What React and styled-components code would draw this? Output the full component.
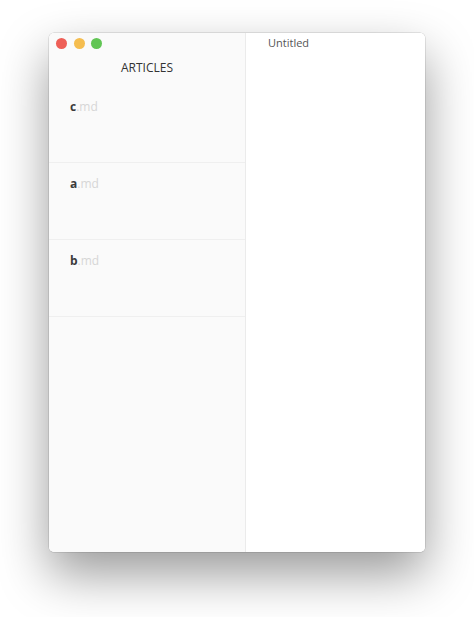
import React from 'react';
import styled, { createGlobalStyle } from 'styled-components';

const GlobalStyle = createGlobalStyle`
  html, body {
    margin: 0;
    padding: 0;
    background: #ffffff;
  }
  body {
    font-family: "Open Sans", "Noto Sans", sans-serif;
    -webkit-font-smoothing: antialiased;
  }
`;

const Page = styled.div`
  display: flex;
  justify-content: center;
  padding-top: 33px;
  height: 617px;
  box-sizing: border-box;
`;

const Window = styled.div`
  width: 376px;
  height: 519px;
  display: flex;
  border-radius: 5px;
  overflow: hidden;
  background: #ffffff;
  box-shadow: 0 0 0 0.5px rgba(0, 0, 0, 0.18), 0 22px 50px rgba(0, 0, 0, 0.4);
`;

const Sidebar = styled.aside`
  width: 196px;
  flex-shrink: 0;
  background: #fafafa;
  border-right: 1px solid #ebebeb;
  display: flex;
  flex-direction: column;
`;

const TitleBar = styled.div`
  height: 20px;
  display: flex;
  align-items: center;
  gap: 6.5px;
  padding-left: 7px;
`;

const Light = styled.span`
  width: 11px;
  height: 11px;
  border-radius: 50%;
  background: ${(p) => p.$color};
`;

const Heading = styled.h2`
  margin: 0;
  height: 33px;
  line-height: 30px;
  text-align: center;
  font-size: 12px;
  font-weight: 400;
  color: #333333;
`;

const ArticleList = styled.ul`
  list-style: none;
  margin: 0;
  padding: 0;
`;

const ArticleRow = styled.li`
  padding: 12px 0 0 21px;
  height: 64px;
  border-bottom: 1px solid #efefef;
  font-size: 12px;
  line-height: 18px;
`;

const Name = styled.span`
  font-weight: 700;
  color: #3a3a3a;
`;

const Ext = styled.span`
  color: #d6d6d6;
`;

const Editor = styled.main`
  flex: 1;
  background: #ffffff;
`;

const DocTitle = styled.div`
  height: 20px;
  line-height: 20px;
  padding-left: 22px;
  font-size: 11px;
  color: #555555;
`;

const articles = ['c', 'a', 'b'];

const App = () => (
  <>
    <GlobalStyle />
    <Page>
      <Window>
        <Sidebar>
          <TitleBar>
            <Light $color="#ee5f57" />
            <Light $color="#f5bd4f" />
            <Light $color="#61c554" />
          </TitleBar>
          <Heading>ARTICLES</Heading>
          <ArticleList>
            {articles.map((name) => (
              <ArticleRow key={name}>
                <Name>{name}</Name>
                <Ext>.md</Ext>
              </ArticleRow>
            ))}
          </ArticleList>
        </Sidebar>
        <Editor>
          <DocTitle>Untitled</DocTitle>
        </Editor>
      </Window>
    </Page>
  </>
);

export default App;
